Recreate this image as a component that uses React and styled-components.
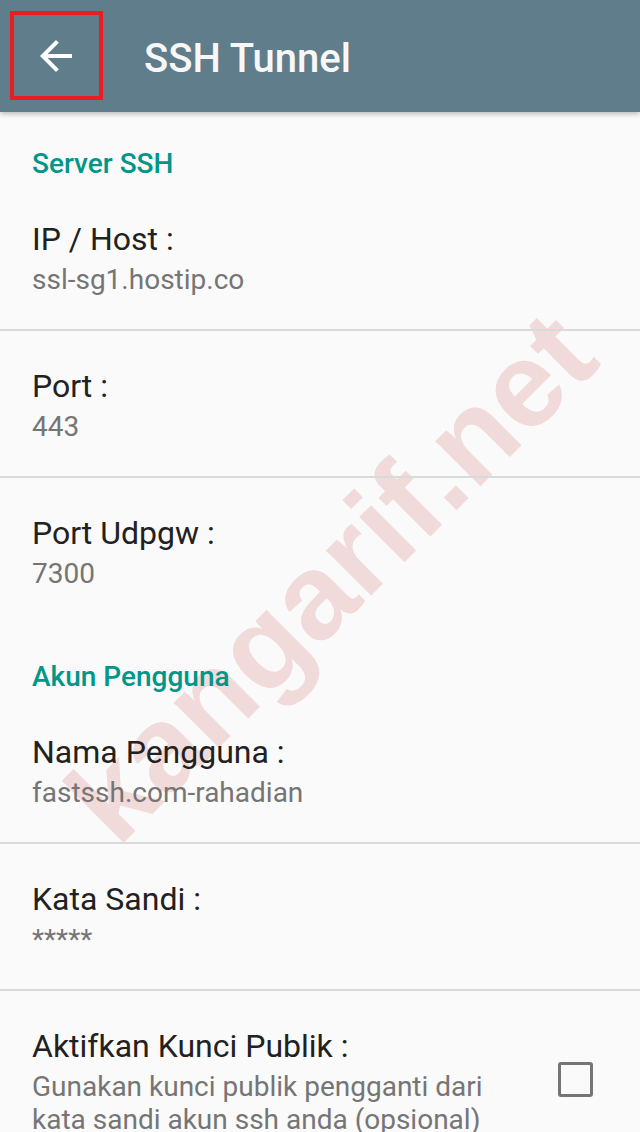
import React from 'react'
import styled, { createGlobalStyle } from 'styled-components'

const GlobalStyle = createGlobalStyle`
  html, body {
    margin: 0;
    padding: 0;
    overflow: hidden;
    background: #fafafa;
  }
  body {
    font-family: Roboto, 'Noto Sans', sans-serif;
  }
`

const Screen = styled.div`
  position: relative;
  isolation: isolate;
  width: 640px;
  height: 1132px;
  overflow: hidden;
  background: #fafafa;
  display: flex;
  flex-direction: column;
`

const AppBar = styled.header`
  position: relative;
  z-index: 2;
  flex-shrink: 0;
  height: 112px;
  display: flex;
  align-items: center;
  background: #607d8b;
  box-shadow: 0 2px 5px rgba(0, 0, 0, 0.26);
`

const NavButton = styled.button`
  width: 112px;
  height: 112px;
  padding: 0;
  border: none;
  background: transparent;
  display: flex;
  align-items: center;
  justify-content: center;
  color: #ffffff;
`

const Title = styled.h1`
  margin: 0 0 0 32px;
  padding-top: 4px;
  font-size: 40px;
  font-weight: 500;
  color: #f7f7f7;
  letter-spacing: 0;
`

const Highlight = styled.div`
  position: absolute;
  z-index: 3;
  left: 10px;
  top: 11px;
  width: 93px;
  height: 89px;
  box-sizing: border-box;
  border: 4px solid #ec1c24;
`

const List = styled.div`
  position: relative;
  z-index: 1;
  display: flex;
  flex-direction: column;
`

const Category = styled.div`
  padding: 35px 32px 3px;
  font-size: 28px;
  line-height: 34px;
  font-weight: 500;
  color: #009688;
`

const PrefRow = styled.div`
  display: flex;
  align-items: center;
  gap: 56px;
  min-height: 145px;
  box-sizing: border-box;
  padding: 35px 0 33px 32px;
  border-bottom: 2px solid ${p => (p.$last ? 'transparent' : '#dadada')};
`

const PrefText = styled.div`
  flex: 1;
  display: flex;
  flex-direction: column;
`

const PrefTitle = styled.div`
  font-size: 32px;
  line-height: 40px;
  color: #212121;
`

const PrefValue = styled.div`
  margin-top: 4px;
  font-size: 28px;
  line-height: 33px;
  color: #757575;
`

const CheckBox = styled.span`
  flex-shrink: 0;
  width: 35px;
  height: 35px;
  margin: 0 47px 3px 0;
  box-sizing: border-box;
  border: 3px solid #757575;
  border-radius: 3px;
`

// watermark stamped across the screenshot
const Watermark = styled.div`
  position: absolute;
  z-index: 0;
  left: 331px;
  top: 577px;
  transform: translate(-50%, -50%) rotate(-45deg);
  font-family: 'Liberation Sans', Arial, sans-serif;
  font-size: 121px;
  line-height: 1;
  font-weight: 700;
  white-space: nowrap;
  color: rgba(205, 90, 90, 0.2);
  pointer-events: none;
`

const BackArrow = () => (
  <svg width="48" height="48" viewBox="0 0 24 24" fill="currentColor">
    <path d="M20 11H7.83l5.59-5.59L12 4l-8 8 8 8 1.41-1.41L7.83 13H20v-2z" />
  </svg>
)

const sections = [
  {
    name: 'Server SSH',
    items: [
      { title: 'IP / Host :', value: 'ssl-sg1.hostip.co' },
      { title: 'Port :', value: '443' },
      { title: 'Port Udpgw :', value: '7300' }
    ]
  },
  {
    name: 'Akun Pengguna',
    items: [
      { title: 'Nama Pengguna :', value: 'fastssh.com-rahadian' },
      { title: 'Kata Sandi :', value: '*****' },
      {
        title: 'Aktifkan Kunci Publik :',
        value: 'Gunakan kunci publik pengganti dari kata sandi akun ssh anda (opsional)',
        checkbox: true
      }
    ]
  }
]

export default function App() {
  return (
    <Screen>
      <GlobalStyle />
      <AppBar>
        <NavButton aria-label="Kembali">
          <BackArrow />
        </NavButton>
        <Title>SSH Tunnel</Title>
      </AppBar>
      <Highlight />

      <List>
        {sections.map((section, s) => (
          <React.Fragment key={section.name}>
            <Category>{section.name}</Category>
            {section.items.map((item, i) => (
              <PrefRow
                key={item.title}
                $last={s === 0 && i === section.items.length - 1}
              >
                <PrefText>
                  <PrefTitle>{item.title}</PrefTitle>
                  <PrefValue>{item.value}</PrefValue>
                </PrefText>
                {item.checkbox && <CheckBox />}
              </PrefRow>
            ))}
          </React.Fragment>
        ))}
      </List>

      <Watermark>kangarif.net</Watermark>
    </Screen>
  )
}
